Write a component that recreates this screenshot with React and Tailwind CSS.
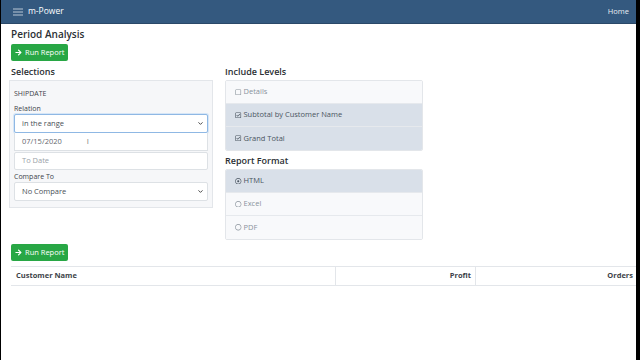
import { FaArrowRight, FaRegSquare, FaRegCheckSquare, FaRegDotCircle, FaRegCircle } from "react-icons/fa";
import { ChevronDown } from "lucide-react";

function RunButton() {
  return (
    <button className="flex h-[17px] items-center gap-[3px] rounded-[2px] bg-[#28a745] px-[4px] text-[7.5px] text-white">
      <FaArrowRight className="h-[7px] w-[7px]" />
      Run Report
    </button>
  );
}

function SelectBox({ text, focus }) {
  return (
    <div
      className={`flex h-[19px] items-center justify-between rounded-[2px] border bg-white pl-[7px] pr-[3px] text-[7.5px] text-[#495057] ${
        focus ? "border-[#8fb8e4] shadow-[0_0_0_1px_#d6e6f7]" : "border-[#dde1e5]"
      }`}
    >
      <span>{text}</span>
      <ChevronDown className="h-[7px] w-[7px] text-[#333]" strokeWidth={3} />
    </div>
  );
}

function ListItem({ icon, text, active, last }) {
  return (
    <div
      className={`flex h-[23px] items-center gap-[2px] px-[9px] text-[7.5px] ${
        active ? "bg-[#d9e0e9] text-[#4a5561]" : "bg-[#f8f9fb] text-[#8a939c]"
      } ${last ? "" : "border-b border-[#e6e9ed]"}`}
    >
      {icon}
      <span>{text}</span>
    </div>
  );
}

export default function App() {
  return (
    <div className="flex h-[360px] w-[640px] bg-black" style={{ fontFamily: "'Open Sans', sans-serif" }}>
      <div className="ml-[1px] flex w-[635px] flex-col bg-white">
        {/* Navbar */}
        <div className="flex h-[24px] items-center justify-between border-b border-[#2a4868] bg-[#34597f] pl-[12px] pr-[7px] text-white">
          <div className="flex items-center gap-[5px]">
            <svg width="10" height="8" viewBox="0 0 10 8" className="text-[#c9d4e0]">
              <path d="M0 1h10M0 4h10M0 7h10" stroke="currentColor" strokeWidth="0.9" />
            </svg>
            <span className="text-[8.5px] font-medium">m-Power</span>
          </div>
          <span className="text-[7.5px] text-[#e8edf3]">Home</span>
        </div>

        <div className="pl-[8px]">
          <h1 className="mt-[4px] pl-[2px] text-[10px] font-semibold leading-[13px] text-[#2b2f33]">Period Analysis</h1>
          <div className="mt-[3px] pl-[2px]">
            <RunButton />
          </div>

          <div className="mt-[4px] flex gap-[12px]">
            {/* Selections */}
            <div className="w-[204px]">
              <h2 className="pl-[2px] text-[9px] font-semibold leading-[13px] text-[#2b2f33]">Selections</h2>
              <div className="mt-[2px] border border-[#e3e6ea] bg-[#f6f7f9] px-[4px] pb-[6px] pt-[8px] text-[7px] text-[#3d4349]">
                <div className="leading-[9px]">SHIPDATE</div>
                <div className="mt-[6px] leading-[9px]">Relation</div>
                <div className="mt-[1px]">
                  <SelectBox text="in the range" focus />
                </div>
                <div className="flex h-[18px] items-center border border-t-0 border-[#dde1e5] bg-white pl-[7px] text-[7.5px] text-[#5f666d]">
                  <span>07/15/2020</span>
                  <span className="ml-[25px] text-[#777]">I</span>
                </div>
                <div className="mt-[1px] flex h-[18px] items-center rounded-[2px] border border-[#dde1e5] bg-white pl-[7px] text-[7.5px] text-[#9aa1a8]">
                  To Date
                </div>
                <div className="mt-[2px] leading-[9px]">Compare To</div>
                <div className="mt-[1px]">
                  <SelectBox text="No Compare" />
                </div>
              </div>
            </div>

            {/* Right column */}
            <div className="w-[198px]">
              <h2 className="text-[9px] font-semibold leading-[13px] text-[#2b2f33]">Include Levels</h2>
              <div className="mt-[2px] overflow-hidden rounded-[2px] border border-[#e3e6ea]">
                <ListItem icon={<FaRegSquare className="h-[6.5px] w-[6.5px]" />} text="Details" />
                <ListItem icon={<FaRegCheckSquare className="h-[6.5px] w-[6.5px]" />} text="Subtotal by Customer Name" active />
                <ListItem icon={<FaRegCheckSquare className="h-[6.5px] w-[6.5px]" />} text="Grand Total" active last />
              </div>
              <h2 className="mt-[3px] text-[9px] font-semibold leading-[13px] text-[#2b2f33]">Report Format</h2>
              <div className="mt-[2px] overflow-hidden rounded-[2px] border border-[#e3e6ea]">
                <ListItem icon={<FaRegDotCircle className="h-[6.5px] w-[6.5px]" />} text="HTML" active />
                <ListItem icon={<FaRegCircle className="h-[6.5px] w-[6.5px]" />} text="Excel" />
                <ListItem icon={<FaRegCircle className="h-[6.5px] w-[6.5px]" />} text="PDF" last />
              </div>
            </div>
          </div>

          <div className="mt-[4px] pl-[2px]">
            <RunButton />
          </div>

          <div className="ml-[2px] mt-[5px] flex h-[20px] border-y border-[#e3e6ea] text-[7.5px] font-bold text-[#3d4349]">
            <div className="flex w-[325px] items-center border-r border-[#e3e6ea] pl-[5px]">Customer Name</div>
            <div className="flex w-[140px] items-center justify-end border-r border-[#e3e6ea] pr-[4px]">Profit</div>
            <div className="flex flex-1 items-center justify-end pr-[3px]">Orders</div>
          </div>
        </div>
      </div>
    </div>
  );
}
